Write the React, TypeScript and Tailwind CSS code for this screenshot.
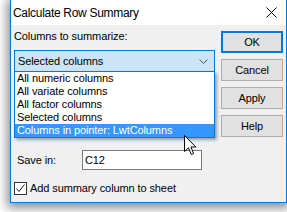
import React from 'react';

const font = { fontFamily: '"Liberation Sans", Arial, sans-serif' };

const options = [
  'All numeric columns',
  'All variate columns',
  'All factor columns',
  'Selected columns',
  'Columns in pointer: LwtColumns',
];

function DialogButton({ label, primary }: { label: string; primary?: boolean }) {
  return (
    <div
      className={
        primary
          ? 'h-[22px] w-[62px] border-2 border-[#0078d7] bg-[#e1e1e1] flex items-center justify-center text-black'
          : 'h-[22px] w-[62px] border border-[#adadad] bg-[#e1e1e1] flex items-center justify-center text-black'
      }
    >
      {label}
    </div>
  );
}

function Cursor() {
  return (
    <svg width="14" height="22" viewBox="0 0 14 22" className="absolute left-[184px] top-[135px]">
      <path
        d="M0.5 0.5 V16.5 L4.5 12.8 L7.3 19.5 L9.6 18.5 L6.9 12 H11.8 Z"
        fill="#fff"
        stroke="#000"
        strokeWidth="1"
      />
    </svg>
  );
}

export default function App() {
  const [selected] = React.useState(4);

  return (
    <div className="relative w-[287px] h-[212px] overflow-hidden bg-white text-[11px] tracking-[-0.1px]" style={font}>
      <div className="ml-[10px] w-[277px] h-[203px] border border-t-0 border-[#0078d7] bg-white shadow-[0_2px_10px_3px_rgba(0,0,0,0.45)] flex flex-col">
        {/* title bar */}
        <div className="h-[25px] flex items-center justify-between pl-[2px] pr-[9px] bg-white">
          <span className="text-[12px] tracking-[-0.3px] text-black">Calculate Row Summary</span>
          <svg width="11" height="11" viewBox="0 0 11 11">
            <path d="M0.5 0.5 L10.5 10.5 M10.5 0.5 L0.5 10.5" stroke="#000" strokeWidth="1" />
          </svg>
        </div>

        {/* body */}
        <div className="relative flex-1 bg-[#f0f0f0] flex text-black">
          <div className="w-[201px] ml-[3px] flex flex-col">
            <div className="mt-[4px] h-[14px] leading-[14px]">Columns to summarize:</div>
            <div className="mt-[7px] h-[22px] border border-[#0078d7] bg-[#cce4f7] flex items-center justify-between pl-[3px] pr-[6px]">
              <span>{options[3]}</span>
              <svg width="9" height="5" viewBox="0 0 9 5">
                <path d="M0.5 0.5 L4.5 4.5 L8.5 0.5" fill="none" stroke="#555" strokeWidth="1" />
              </svg>
            </div>

            <div className="mt-[78px] flex items-center h-[20px]">
              <span className="w-[68px] pl-[3px]">Save in:</span>
              <div className="w-[120px] h-[20px] border border-[#7a7a7a] bg-white flex items-center pl-[2px]">C12</div>
            </div>

            <div className="mt-[10px] flex items-center gap-[3px]">
              <div className="w-[13px] h-[13px] border border-[#333] bg-white flex items-center justify-center">
                <svg width="11" height="11" viewBox="0 0 11 11">
                  <path d="M1.5 5.5 L4 8.5 L9.5 1.5" fill="none" stroke="#222" strokeWidth="1" />
                </svg>
              </div>
              <span>Add summary column to sheet</span>
            </div>
          </div>

          <div className="ml-[6px] mt-[6px] flex flex-col gap-[6px]">
            <DialogButton label="OK" primary />
            <DialogButton label="Cancel" />
            <DialogButton label="Apply" />
            <DialogButton label="Help" />
          </div>

          {/* open dropdown list */}
          <div className="absolute left-[3px] top-[46px] w-[201px] border border-[#0078d7] bg-white shadow-[2px_2px_3px_rgba(0,0,0,0.35)]">
            {options.map((o, i) => (
              <div
                key={o}
                className={
                  i === selected
                    ? 'h-[13px] leading-[13px] pl-[2px] bg-[#3399ff] text-white'
                    : 'h-[13px] leading-[13px] pl-[2px] text-black'
                }
              >
                {o}
              </div>
            ))}
          </div>
        </div>
      </div>

      <Cursor />
    </div>
  );
}
